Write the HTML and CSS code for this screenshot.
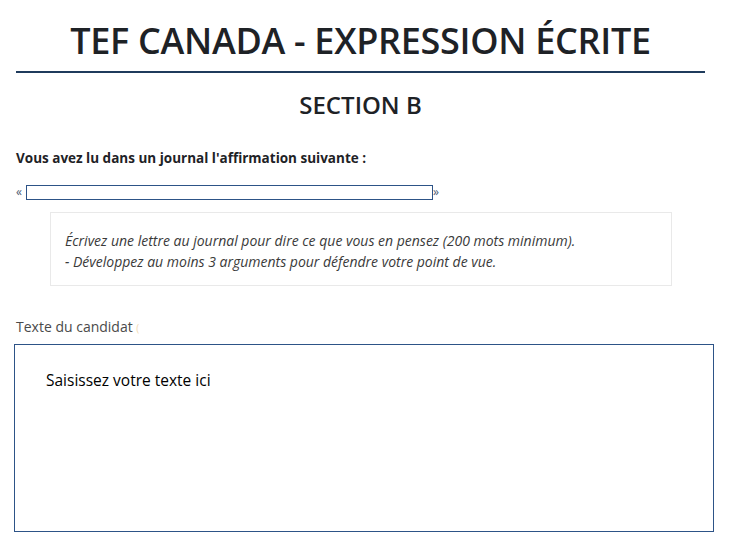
FILE: index.html
```html
<!DOCTYPE html>
<html lang="fr">
<head>
<meta charset="utf-8">
<title>TEF Canada - Expression écrite</title>
<link rel="stylesheet" href="styles.css">
</head>
<body>
<div class="page">
  <header class="header">
    <h1 class="title">TEF CANADA - EXPRESSION ÉCRITE</h1>
  </header>
  <h2 class="section">SECTION B</h2>
  <p class="prompt">Vous avez lu dans un journal l'affirmation suivante :</p>
  <div class="quote">
    <span class="guil">«</span><span class="quote-box"></span><span class="guil">»</span>
  </div>
  <div class="instructions">
    <p>Écrivez une lettre au journal pour dire ce que vous en pensez (200 mots minimum).</p>
    <p>- Développez au moins 3 arguments pour défendre votre point de vue.</p>
  </div>
  <label class="label" for="texte">Texte du candidat <span class="mark">(</span></label>
  <div class="answer" id="texte">Saisissez votre texte ici</div>
</div>
</body>
</html>
```
FILE: styles.css
```css
html, body {
  margin: 0;
  padding: 0;
  background: #ffffff;
}
body {
  font-family: "Open Sans", "Noto Sans", sans-serif;
  color: #212529;
}
.page {
  padding: 0 0 0 16px;
}
.header {
  width: 689px;
  border-bottom: 2px solid #1f3b5c;
  padding-top: 18px;
  height: 53px;
  box-sizing: content-box;
}
.title {
  margin: 0;
  text-align: center;
  font-size: 36px;
  font-weight: 600;
  line-height: 46px;
  color: #1e2226;
  letter-spacing: -0.3px;
}
.section {
  width: 689px;
  margin: 16px 0 0;
  text-align: center;
  font-size: 24px;
  font-weight: 600;
  line-height: 32px;
  color: #1e2226;
}
.prompt {
  margin: 27px 0 0;
  font-size: 13.5px;
  font-weight: 700;
  line-height: 20px;
  color: #1e2226;
}
.quote {
  display: flex;
  align-items: center;
  margin-top: 16px;
  height: 16px;
  font-size: 12px;
  color: #4a5a72;
}
.guil {
  line-height: 16px;
  width: 10px;
}
.quote-box {
  display: block;
  width: 405px;
  height: 13px;
  border: 1px solid #2d5387;
}
.instructions {
  margin: 12px 0 0 34px;
  width: 620px;
  height: 72px;
  border: 1px solid #e9e9e9;
  box-sizing: content-box;
  padding: 0;
  font-style: italic;
  font-size: 14px;
  line-height: 21px;
  color: #3a3a3a;
}
.instructions p {
  margin: 0 0 0 14px;
}
.instructions p:first-child {
  margin-top: 17px;
}
.label {
  display: block;
  margin-top: 31px;
  font-size: 14px;
  line-height: 20px;
  color: #4a4a4a;
}
.mark {
  color: #f3d9b0;
  font-size: 10px;
}
.answer {
  margin: 6px 0 0 -2px;
  border: 1px solid #2d5387;
  font-size: 15.5px;
  color: #000;
  box-sizing: content-box;
  padding: 24px 0 0 31px;
  width: 667px;
  height: 162px;
}
```
